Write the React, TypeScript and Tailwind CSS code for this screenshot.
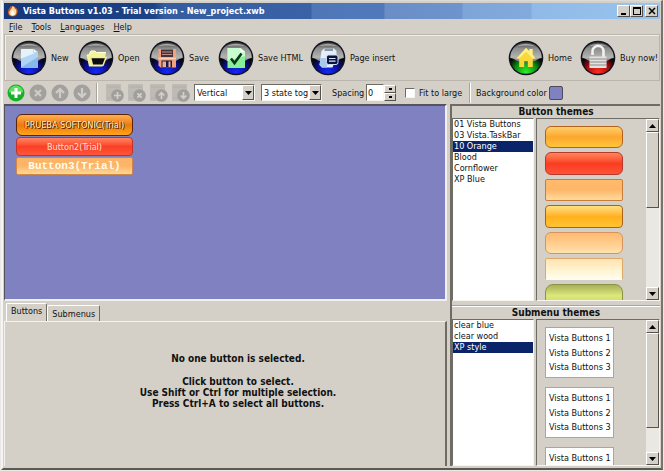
import { useState } from "react";
import type { ReactNode } from "react";

const raised = "border border-t-white border-l-white border-r-[#55524c] border-b-[#55524c] bg-[#d4d0c8]";
const sunken = "border border-t-[#6f6c66] border-l-[#6f6c66] border-r-[#f6f5f0] border-b-[#f6f5f0]";

function AppLogo() {
  return (
    <svg className="size-3" viewBox="0 0 12 12" aria-hidden="true">
      <path d="M3.5 1.5C5 .4 7.5.8 8.6 2.6c1.8 1 2.7 3.3 1.9 5.5C9.700 10.600 8 11.600 5.600 11.600 2.800 11.600.9 9.800.9 7.200c0-2 1.300-3.800 2.600-5.700z" fill="#c4581f" />
      <path d="M5.500 1.200c1.800.5 2.600 1.800 2.300 3.300l1-.6c1.300 2.400.7 6.500-3 6.900-2.500.1-3.700-1.500-3.600-3.200.1-2.100 2.500-3.400 3.300-6.400z" fill="#ffd9a0" />
      <path d="M5.200 5.500c2 .8 2.700 2.300 1.900 4.200-.7 1-2.700 1-3.300-.3-.5-1.400.9-2.200 1.400-3.900z" fill="#fff" />
    </svg>
  );
}

function Orb({ id, glow, deep, children }: { id: string; glow: string; deep: string; children: ReactNode }) {
  return (
    <svg className="size-9 shrink-0" viewBox="0 0 36 36" aria-hidden="true">
      <defs>
        <linearGradient id={id + "-top"} x1="0" y1="0" x2="0" y2="1">
          <stop offset="0" stopColor="#3c3c3c" />
          <stop offset="0.3" stopColor="#8c8c8a" />
          <stop offset="0.75" stopColor="#b4b4b2" />
          <stop offset="1" stopColor="#6a6a6a" />
        </linearGradient>
        <radialGradient id={id + "-low"} cx="0.5" cy="0.95" r="0.6">
          <stop offset="0" stopColor={glow} />
          <stop offset="0.6" stopColor={deep} />
          <stop offset="1" stopColor="#050508" />
        </radialGradient>
      </defs>
      <circle cx="18" cy="18" r="17.300" fill="#111320" />
      <circle cx="18" cy="18" r="15.800" fill={"url(#" + id + "-low)"} />
      <path d="M2.200 18a15.800 15.800 0 0 1 31.600 0c-2 .2-4 1-6 2.500-4 2.500-15 2.500-19.600 0-2-1.500-4-2.300-6-2.500z" fill={"url(#" + id + "-top)"} />
      <path d="M9 6.500C14 2.800 22 2.800 27 6.500c-5-1.200-13-1.200-18 0z" fill="#dededc" opacity="0.6" />
      {children}
    </svg>
  );
}

function NewArt() {
  return (
    <>
      <path d="M10 9h13l4 3v15.500H10z" fill="#e4f2fd" />
      <path d="M10 18.500 27 12v15.500H10z" fill="#b0d4f4" />
      <path d="M10 27.500 27 17v10.500z" fill="#86b8ea" />
      <path d="M22.500 9v3.500H27z" fill="#fff" stroke="#9cc0e2" strokeWidth="0.600" />
    </>
  );
}

function OpenArt() {
  return (
    <>
      <path d="M8.500 15h2l2-4h4.500l1.500 1.500H28l-1 5-2.500 9H11z" fill="#f4f49c" />
      <path d="M12.500 17.500H28l-3 7.800H14.500z" fill="#0b0b14" stroke="#f2f08a" strokeWidth="1.500" />
      <path d="M9 15h2l2-4h4l1.500 1.500H28" fill="none" stroke="#ffffd8" />
    </>
  );
}

function SaveArt() {
  return (
    <>
      <path d="M9.500 9h17.500v18.500H11.500l-2-2z" fill="#f5a07c" />
      <path d="M12 9.500h12v7.500H12z" fill="#40333a" />
      <path d="M13 12h10M13 14.500h10" stroke="#c08c80" strokeWidth="1" />
      <path d="M9.500 18.500H27" stroke="#ffd0b4" strokeWidth="1.500" />
      <path d="M12.500 20.500h10.500v7H12.500z" fill="#1c1c3c" />
      <path d="M13.500 21.500h3.500v5.500h-3.500zM19.500 21.500h2v5.500h-2z" fill="#e8b09c" />
    </>
  );
}

function HtmlArt() {
  return (
    <>
      <path d="M9.500 8h13l4.500 4v16H9.500z" fill="#86f096" />
      <path d="M9.500 8h13l4.500 4v4L9.500 21z" fill="#c8fdd0" />
      <path d="M22.500 8v4H27z" fill="#fff" />
      <path d="m13 18.500 3.500 4.500 7-9.500" fill="none" stroke="#0c3418" strokeWidth="2.600" />
    </>
  );
}

function InsertArt() {
  return (
    <>
      <path d="M11.500 11 14 8.500h10l2.500 2.500v6l-4 10.500H12L9.500 25z" fill="#e4edf8" />
      <path d="M14.500 8.500h8.500v2.500h-8.500z" fill="#8896a8" />
      <path d="M10.500 18H17v9.500h-5L9.500 25z" fill="#a8c8ec" />
      <rect x="16.500" y="15" width="11.500" height="9.500" rx="2" fill="#0b1440" stroke="#cfdcf4" />
      <path d="M19 18.500h6.500M19 21.200h6.500" stroke="#dce6ff" strokeWidth="1.200" />
    </>
  );
}

function HomeArt() {
  return (
    <>
      <path d="M18 8 8.500 18.500h2.700V27h5v-6h3.600v6h5v-8.500h2.700L24.500 14.500V9h-3v2.500z" fill="#f8d83c" />
      <path d="M18 8 8.500 18.500h2.700L18 11.500l6.500 7h3L24.500 14.500V9h-3v2.500z" fill="#fff08a" />
    </>
  );
}

function LockArt() {
  return (
    <>
      <path d="M12.500 15v-3.500a5 4.500 0 0 1 11-1V17" fill="none" stroke="#f2f2f2" strokeWidth="2.600" />
      <path d="M9.500 16.500h17V28h-17z" fill="#e2e2e2" />
      <path d="M9.500 19h17M9.500 22h17M9.500 25h17" stroke="#8a8a8a" strokeWidth="1" />
    </>
  );
}

type Tool = { id: string; label: string; width: string; glow: string; deep: string; art: ReactNode };

const fileTools: Tool[] = [
  { id: "new", label: "New", width: "w-[67px]", glow: "#1428ff", deep: "#0a0f96", art: <NewArt /> },
  { id: "open", label: "Open", width: "w-[71px]", glow: "#1428ff", deep: "#0a0f96", art: <OpenArt /> },
  { id: "save", label: "Save", width: "w-[69px]", glow: "#1428ff", deep: "#0a0f96", art: <SaveArt /> },
  { id: "html", label: "Save HTML", width: "w-[92px]", glow: "#1428ff", deep: "#0a0f96", art: <HtmlArt /> },
  { id: "insert", label: "Page insert", width: "w-[92px]", glow: "#1428ff", deep: "#0a0f96", art: <InsertArt /> },
];

const webTools: Tool[] = [
  { id: "home", label: "Home", width: "w-[72px]", glow: "#2cf02c", deep: "#0c8a10", art: <HomeArt /> },
  { id: "buy", label: "Buy now!", width: "w-[79px]", glow: "#ff2c20", deep: "#a80c0c", art: <LockArt /> },
];

function ToolButton({ tool }: { tool: Tool }) {
  return (
    <button type="button" className={"flex items-center gap-1 whitespace-nowrap text-left " + tool.width}>
      <Orb id={tool.id} glow={tool.glow} deep={tool.deep}>{tool.art}</Orb>
      {tool.label}
    </button>
  );
}

const glyphs = {
  add: "M9 4v10M4 9h10",
  remove: "M6 6l6 6M12 6l-6 6",
  up: "M9 14V5M5 9l4-4 4 4",
  down: "M9 4v9M5 9l4 4 4-4",
};

type Glyph = keyof typeof glyphs;

function RoundButton({ label, glyph, active }: { label: string; glyph: Glyph; active?: boolean }) {
  return (
    <button type="button" aria-label={label} disabled={!active}>
      <svg className="size-[18px]" viewBox="0 0 18 18" aria-hidden="true">
        <circle cx="9" cy="9" r="8.500" fill={active ? "#17b02a" : "#a3a19d"} />
        {active && <path d="M2 8a7 6.500 0 0 1 14 0c-4 2-10 2-14 0z" fill="#5fdc62" />}
        <path d={glyphs[glyph]} fill="none" stroke={active ? "#fff" : "#d0cdc7"} strokeWidth={active ? 3 : 2.200} />
      </svg>
    </button>
  );
}

function SubmenuButton({ label, glyph }: { label: string; glyph: Glyph }) {
  return (
    <button type="button" aria-label={label} disabled>
      <svg className="size-[18px]" viewBox="0 0 18 18" aria-hidden="true">
        <path d="M0 0h15v17H0z" fill="#bebbb5" />
        <path d="M1 3h13M1 14h5" stroke="#b2afa9" />
        <circle cx="11.500" cy="11.500" r="6.300" fill="#a19f9b" />
        <g transform="translate(5.200 5.200) scale(0.7)">
          <path d={glyphs[glyph]} fill="none" stroke="#d4d1cb" strokeWidth="2.400" />
        </g>
      </svg>
    </button>
  );
}

function Arrow({ up }: { up?: boolean }) {
  return (
    <svg className="h-1 w-[7px]" viewBox="0 0 7 4" aria-hidden="true">
      <path d={up ? "M0 4h7L3.500 0z" : "M0 0h7L3.500 4z"} fill="#000" />
    </svg>
  );
}

function Dropdown({ label, options }: { label: string; options: string[] }) {
  return (
    <div className={"grid h-[17px] w-[61px] bg-white " + sunken}>
      <select aria-label={label} className="col-start-1 row-start-1 w-full min-w-0 appearance-none pr-[13px] pl-0.5 outline-none">
        {options.map((o) => <option key={o}>{o}</option>)}
      </select>
      <span className={"pointer-events-none col-start-1 row-start-1 flex w-3 items-center justify-center justify-self-end " + raised}>
        <Arrow />
      </span>
    </div>
  );
}

function Scrollbar({ name, thumb }: { name: string; thumb: string }) {
  return (
    <div className="flex w-[13px] shrink-0 flex-col bg-[#eae8e3]">
      <button type="button" aria-label={"Scroll " + name + " up"} className={"flex h-[13px] shrink-0 items-center justify-center " + raised}><Arrow up /></button>
      <div className={"shrink-0 " + thumb + " " + raised} />
      <div className="flex-1" />
      <button type="button" aria-label={"Scroll " + name + " down"} className={"flex h-[13px] shrink-0 items-center justify-center " + raised}><Arrow /></button>
    </div>
  );
}

function ThemeList({ items, initial }: { items: string[]; initial: string }) {
  const [selected, setSelected] = useState(initial);
  return (
    <div className={"w-[82px] shrink-0 bg-white " + sunken}>
      {items.map((item) => (
        <button
          key={item}
          type="button"
          aria-pressed={item === selected}
          onClick={() => setSelected(item)}
          className={"block h-[11px] w-full whitespace-nowrap pl-px text-left leading-[11px] " + (item === selected ? "bg-[#0a246a] text-white" : "")}
        >
          {item}
        </button>
      ))}
    </div>
  );
}

const swatches = [
  "h-[22px] rounded-md border-[#b4621c] bg-linear-to-b from-[#ffcf68] via-[#fba72c] to-[#ffc63c]",
  "h-[23px] rounded-md border-[#b53a2c] bg-linear-to-b from-[#ff8458] via-[#fb3c22] to-[#ff5236]",
  "h-[22px] rounded-xs border-[#c87c3c] bg-linear-to-b from-[#ffbb6a] via-[#fdb66a] to-[#ffdc9c]",
  "h-[23px] rounded-sm border-[#a8641c] bg-linear-to-b from-[#ffe07c] via-[#ffb01c] to-[#ffc434]",
  "h-[22px] rounded-md border-[#d8925c] bg-linear-to-b from-[#fdbb70] via-[#ffcc8c] to-[#ffe2ac]",
  "h-[22px] rounded-xs border-[#e0a868] border-b-[#fffbe8] bg-linear-to-b from-[#ffe2b0] via-[#fff3cc] to-[#fffdf0]",
  "h-[23px] rounded-lg border-[#8c9444] bg-linear-to-b from-[#a8b058] via-[#dce87c] to-[#ccd84c]",
];

const submenuPreviews = [
  ["Vista Buttons 1", "Vista Buttons 2", "Vista Buttons 3"],
  ["Vista Buttons 1", "Vista Buttons 2", "Vista Buttons 3"],
  ["Vista Buttons 1"],
];

export default function App() {
  const [tab, setTab] = useState("Buttons");
  return (
    <div className="h-screen w-full bg-[#e9e8e4] pr-px pb-px pl-px font-['DejaVu_Sans_Condensed','DejaVu_Sans',sans-serif] text-[9px] leading-3 text-[#111]">
      <div className="flex h-full flex-col border-t border-r-2 border-b-2 border-l-2 border-t-[#dddbd5] border-r-[#77746d] border-b-[#5c5952] border-l-[#f6f5f1] bg-[#d4d0c8] pt-0.5 pr-px pl-px">
        <header className="flex h-4 shrink-0 items-center gap-1 bg-[linear-gradient(90deg,#15377b_0px,#1d4387_150px,#345c9f_160px,#3a62a6_307px,#4f77b8_308px,#5079bb_380px,#6a8dc6_381px,#6f94cd_458px,#7ea5d8_459px,#82aadd_527px,#8fb9e6_528px,#9ac5f0_100%)] pl-[3px] pr-0.5">
          <AppLogo />
          <h1 className="flex-1 truncate text-[9px] font-bold text-white">Vista Buttons v1.03 - Trial version - New_project.xwb</h1>
          <div className="flex">
            <button type="button" aria-label="Minimize" className={"flex h-3 w-[13px] items-end justify-center pb-px " + raised}>
              <span className="h-0.5 w-[5px] bg-black" />
            </button>
            <button type="button" aria-label="Maximize" className={"flex h-3 w-[13px] items-center justify-center " + raised}>
              <span className="h-2 w-2 border border-t-2 border-black" />
            </button>
            <button type="button" aria-label="Close" className={"ml-0.5 flex h-3 w-[13px] items-center justify-center " + raised}>
              <svg className="size-2" viewBox="0 0 8 8" aria-hidden="true"><path d="M1 1l6 6M7 1L1 7" stroke="#000" strokeWidth="1.500" /></svg>
            </button>
          </div>
        </header>

        <nav className="flex h-[15px] shrink-0 items-center gap-[9px] pl-[5px]">
          {["File", "Tools", "Languages", "Help"].map((m) => (
            <button key={m} type="button"><span className="underline">{m[0]}</span>{m.slice(1)}</button>
          ))}
        </nav>

        <div className="flex h-[47px] shrink-0 items-center justify-between border border-[#bab6ae] pl-[6px] shadow-[inset_1px_1px_0_#f0eee8]">
          <div className="flex">{fileTools.map((t) => <ToolButton key={t.id} tool={t} />)}</div>
          <div className="flex">{webTools.map((t) => <ToolButton key={t.id} tool={t} />)}</div>
        </div>

        <div className="flex h-[23px] shrink-0 items-center pl-[3px]">
          <div className="flex w-[89px] items-center gap-1">
            <RoundButton label="Add button" glyph="add" active />
            <RoundButton label="Delete button" glyph="remove" />
            <RoundButton label="Move button up" glyph="up" />
            <RoundButton label="Move button down" glyph="down" />
          </div>
          <div className="h-5 border-l border-[#a8a49c] bg-white pl-px" />
          <div className="ml-2 flex w-[88px] items-center gap-1">
            <SubmenuButton label="Add submenu" glyph="add" />
            <SubmenuButton label="Delete submenu" glyph="remove" />
            <SubmenuButton label="Move submenu up" glyph="up" />
            <SubmenuButton label="Move submenu down" glyph="down" />
          </div>
          <div className="flex gap-[6px]">
            <Dropdown label="Orientation" options={["Vertical", "Horizontal"]} />
            <Dropdown label="Button states" options={["3 state toggle", "2 state", "1 state"]} />
          </div>
          <label htmlFor="spacing" className="ml-[10px] w-[34px]">Spacing</label>
          <input id="spacing" defaultValue="0" className={"h-[17px] w-[18px] bg-white pl-px outline-none " + sunken} />
          <div className="flex flex-col">
            <button type="button" aria-label="Increase spacing" className={"flex h-2 w-3 items-center justify-center " + raised}><span className="h-0.5 w-[3px] bg-black" /></button>
            <button type="button" aria-label="Decrease spacing" className={"flex h-2 w-3 items-center justify-center " + raised}><span className="h-0.5 w-[3px] bg-black" /></button>
          </div>
          <input id="fit" type="checkbox" className={"ml-[9px] size-[10px] appearance-none bg-white checked:bg-[#0a246a] " + sunken} />
          <label htmlFor="fit" className="ml-1 w-[50px] whitespace-nowrap">Fit to large</label>
          <div className="h-5 border-l border-[#a8a49c] bg-white pl-px" />
          <span className="ml-[5px] w-[73px] whitespace-nowrap">Background color</span>
          <button type="button" aria-label="Choose background color" className="size-[14px] rounded-xs border border-[#4c4a5c] bg-[#7f81c0]" />
        </div>

        <div className="flex min-h-0 flex-1 gap-[3px] pb-[2px]">
          <div className="flex min-w-0 flex-1 flex-col">
            <main className="h-[197px] shrink-0 border-t-2 border-r-2 border-b-2 border-l border-t-[#55545c] border-l-[#55545c] border-r-[#f2f0ec] border-b-[#f2f0ec] bg-[#7f81c0] pt-2 pl-[11px]">
              <div className="flex w-[117px] flex-col gap-px">
                <button type="button" className="h-[22px] whitespace-nowrap rounded-md border border-[#5a2408] bg-linear-to-b from-[#ffb04c] via-[#ee7a08] to-[#ffa41c] text-[#fff0d0] [text-shadow:1px_1px_0_#4a1c04,-1px_0_0_#7a3408]">PRUEBA SOFTONIC(Trial)</button>
                <button type="button" className="h-[19px] rounded-sm border border-[#c03428] bg-linear-to-b from-[#ff8460] via-[#fb3e26] to-[#ff5638] text-[#ffe4d8]">Button2(Trial)</button>
                <button type="button" className="h-[18px] rounded-xs border border-[#d08848] bg-linear-to-b from-[#fcb468] via-[#fdb468] to-[#ffd894] font-['Liberation_Mono',monospace] text-[11px] font-bold text-[#fffbe8]">Button3(Trial)</button>
              </div>
            </main>

            <div role="tablist" className="flex h-5 shrink-0 items-end pl-0.5">
              {["Buttons", "Submenus"].map((t) => (
                <button
                  key={t}
                  type="button"
                  role="tab"
                  aria-selected={t === tab}
                  onClick={() => setTab(t)}
                  className={"rounded-t-xs border-t border-r border-l border-t-white border-r-[#6f6c66] border-l-white px-1 " + (t === tab ? "h-[18px] pb-1" : "h-4")}
                >
                  {t}
                </button>
              ))}
            </div>
            <section className="flex min-h-0 flex-1 flex-col items-center border-t border-r-2 border-l border-t-[#f4f2ee] border-l-[#f4f2ee] border-r-[#6f6c66] pt-[31px] pl-[26px] text-center text-[10px] leading-[11px] font-bold">
              <p>No one button is selected.</p>
              <p className="mt-3">Click button to select.</p>
              <p>Use Shift or Ctrl for multiple selection.</p>
              <p>Press Ctrl+A to select all buttons.</p>
            </section>
          </div>

          <aside className="flex w-[210px] shrink-0 flex-col border-t-2 border-l-2 border-[#6f6c66]">
            <section className="flex h-[195px] shrink-0 flex-col">
              <h2 className="text-center text-[10px] leading-3 font-bold">Button themes</h2>
              <div className="flex min-h-0 flex-1 gap-0.5">
                <ThemeList items={["01 Vista Buttons", "03 Vista.TaskBar", "10 Orange", "Blood", "Cornflower", "XP Blue"]} initial="10 Orange" />
                <div className={"flex min-w-0 flex-1 overflow-hidden " + sunken}>
                  <div className="flex flex-1 flex-col gap-1 overflow-hidden pt-[7px] pl-2">
                    {swatches.map((s) => <div key={s} className={"w-[78px] shrink-0 border " + s} />)}
                  </div>
                  <Scrollbar name="button themes" thumb="h-[76px]" />
                </div>
              </div>
            </section>
            <section className="mt-1 flex min-h-0 flex-1 flex-col border-t border-[#a8a49c]">
              <h2 className="border-t border-white text-center text-[10px] leading-3 font-bold">Submenu themes</h2>
              <div className="flex min-h-0 flex-1 gap-0.5">
                <ThemeList items={["clear blue", "clear wood", "XP style"]} initial="XP style" />
                <div className={"flex min-w-0 flex-1 overflow-hidden " + sunken}>
                  <div className="flex min-h-0 flex-1 flex-col gap-[9px] overflow-hidden pt-[7px] pl-2">
                    {submenuPreviews.map((lines, i) => (
                      <ul key={i} className={"flex w-[69px] flex-col justify-between border border-[#aaa69e] bg-white px-[3px] pt-1 whitespace-nowrap " + (lines.length === 3 ? "h-[51px] shrink-0 pb-1" : "min-h-0 flex-1 border-b-0")}>
                        {lines.map((line) => <li key={line}>{line}</li>)}
                      </ul>
                    ))}
                  </div>
                  <Scrollbar name="submenu themes" thumb="h-[95px]" />
                </div>
              </div>
            </section>
          </aside>
        </div>
      </div>
    </div>
  );
}
